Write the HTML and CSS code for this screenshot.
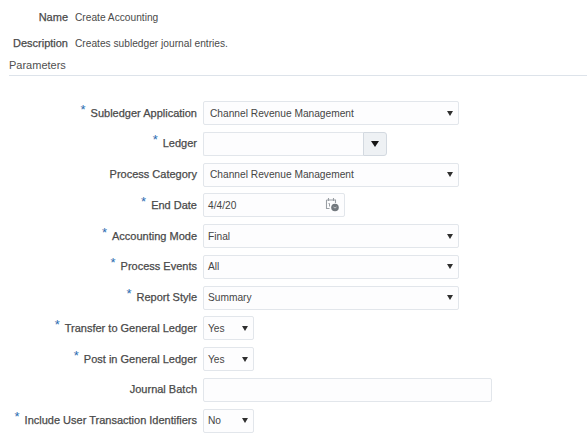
FILE: index.html
```html
<!DOCTYPE html>
<html lang="en">
<head>
<meta charset="utf-8">
<title>Create Accounting</title>
<link rel="stylesheet" href="styles.css">
</head>
<body>
<div class="info">
  <div class="info-row"><span class="info-label">Name</span><span>Create Accounting</span></div>
  <div class="info-row"><span class="info-label">Description</span><span>Creates subledger journal entries.</span></div>
</div>
<h2 class="section">Parameters</h2>
<form class="form">
  <div class="row"><label class="label"><span class="req">*</span>Subledger Application</label><div class="box select wide"><span>Channel Revenue Management</span><i class="caret"></i></div></div>
  <div class="row"><label class="label"><span class="req">*</span>Ledger</label><div class="combo"><div class="box ledger"></div><div class="combo-btn"><i class="caret big"></i></div></div></div>
  <div class="row"><label class="label">Process Category</label><div class="box select wide"><span>Channel Revenue Management</span><i class="caret"></i></div></div>
  <div class="row"><label class="label"><span class="req">*</span>End Date</label><div class="box date"><span>4/4/20</span>
    <svg class="cal" width="15" height="15" viewBox="0 0 15 15"><path d="M1.5 3h9v3M1.5 3v8.5h3M3.5 1v3M8.5 1v3" fill="none" stroke="#9a9fa4" stroke-width="1.1"/><path d="M3.5 6.5h1v3" fill="none" stroke="#9a9fa4"/><circle cx="10" cy="10.5" r="3.8" fill="#73797e"/><path d="M8.5 10l1.5 1 1.5-1" fill="none" stroke="#d5d8da" stroke-width=".8"/></svg></div></div>
  <div class="row"><label class="label"><span class="req">*</span>Accounting Mode</label><div class="box select wide narrow-pad"><span>Final</span><i class="caret"></i></div></div>
  <div class="row"><label class="label"><span class="req">*</span>Process Events</label><div class="box select wide narrow-pad"><span>All</span><i class="caret"></i></div></div>
  <div class="row"><label class="label"><span class="req">*</span>Report Style</label><div class="box select wide narrow-pad"><span>Summary</span><i class="caret"></i></div></div>
  <div class="row"><label class="label"><span class="req">*</span>Transfer to General Ledger</label><div class="box select small"><span>Yes</span><i class="caret"></i></div></div>
  <div class="row"><label class="label"><span class="req">*</span>Post in General Ledger</label><div class="box select small"><span>Yes</span><i class="caret"></i></div></div>
  <div class="row"><label class="label">Journal Batch</label><div class="box batch"></div></div>
  <div class="row"><label class="label"><span class="req">*</span>Include User Transaction Identifiers</label><div class="box select small"><span>No</span><i class="caret"></i></div></div>
</form>
</body>
</html>
```
FILE: styles.css
```css
html, body { margin: 0; padding: 0; }
body {
  width: 587px;
  height: 442px;
  overflow: hidden;
  background: #fff;
  color: #4a4a4a;
  font-family: "Liberation Sans", Arial, sans-serif;
  font-size: 10.2px;
}
.info { display: flex; flex-direction: column; gap: 11px; padding: 10px 0 0; }
.info-row { display: flex; gap: 7px; height: 15px; line-height: 15px; align-items: center; }
.info-label { width: 68px; text-align: right; font-size: 11px; -webkit-text-stroke: 0.25px #4a4a4a; }
.section {
  margin: 7px 0 0 9px;
  padding: 0 0 2px;
  height: 15px;
  line-height: 15px;
  font-size: 11px;
  font-weight: normal;
  border-bottom: 1px solid #dde3ea;
  color: #4f4f4f;
}
.form { display: flex; flex-direction: column; gap: 6.75px; padding-top: 25px; }
.row { display: flex; align-items: center; height: 24px; gap: 6px; }
.label {
  width: 197px;
  padding-bottom: 1px;
  text-align: right;
  font-size: 11px;
  -webkit-text-stroke: 0.25px #4a4a4a;
  white-space: nowrap;
}
.req { color: #2b6cb0; font-size: 13px; line-height: 10px; margin-right: 5px; position: relative; top: -3px; -webkit-text-stroke: 0; }
.box {
  box-sizing: border-box;
  height: 24px;
  border: 1px solid #e2e6eb;
  border-radius: 2px;
  background: #fdfdfe;
  display: flex;
  align-items: center;
  color: #454545;
}
.select { justify-content: space-between; padding: 0 4px 0 6px; }
.wide { width: 256px; }
.narrow-pad { padding-left: 4px; }
.small { width: 51px; padding-left: 4px; padding-right: 4px; }
.caret {
  width: 0; height: 0;
  border-left: 3px solid transparent;
  border-right: 3px solid transparent;
  border-top: 5px solid #2f2f2f;
  margin-right: 1px;
}
.caret.big { border-left-width: 4px; border-right-width: 4px; border-top-width: 6px; border-top-color: #151515; margin: 0; }
.combo { display: flex; }
.ledger { width: 160px; border-radius: 2px 0 0 2px; border-right: 0; }
.combo-btn {
  box-sizing: border-box;
  width: 24px; height: 24px;
  background: #eef1f4;
  border: 1px solid #d3d9e0;
  border-radius: 0 3px 3px 0;
  display: flex; align-items: center; justify-content: center;
}
.date { width: 142px; justify-content: space-between; padding: 0 4px 0 4px; }
.cal { display: block; margin-top: -2px; }
.batch { width: 289px; }
```
